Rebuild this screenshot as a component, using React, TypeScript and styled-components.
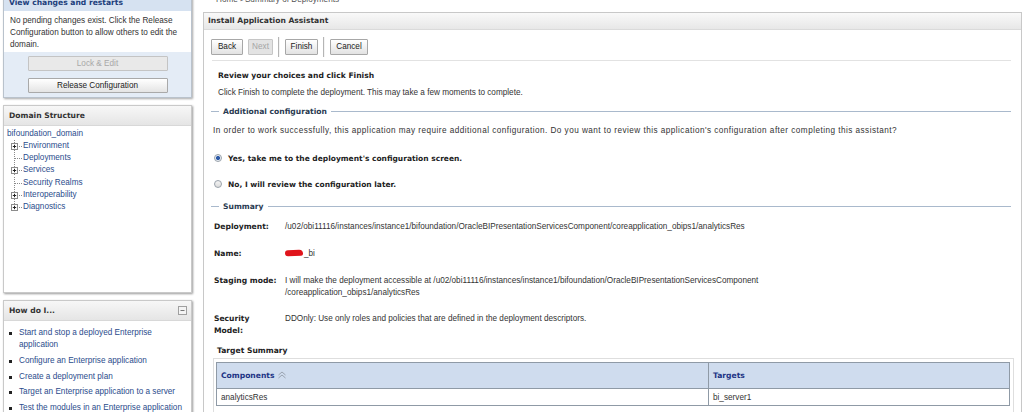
import React from 'react';
import styled, { createGlobalStyle } from 'styled-components';

const GlobalStyle = createGlobalStyle`
  *, *::before, *::after {
    box-sizing: border-box;
  }
  html, body {
    margin: 0;
    padding: 0;
    background: #fff;
  }
  body {
    font-family: "Liberation Sans", Arial, sans-serif;
    font-size: 8.2px;
    color: #333;
    overflow: hidden;
  }
`;

const treeItems = [
  { label: 'Environment', expandable: true },
  { label: 'Deployments', expandable: false },
  { label: 'Services', expandable: true },
  { label: 'Security Realms', expandable: false },
  { label: 'Interoperability', expandable: true },
  { label: 'Diagnostics', expandable: true },
];

const howItems = [
  'Start and stop a deployed Enterprise application',
  'Configure an Enterprise application',
  'Create a deployment plan',
  'Target an Enterprise application to a server',
  'Test the modules in an Enterprise application',
];

function TreeJoint({ expandable, last }: { expandable: boolean; last: boolean }) {
  return (
    <svg width="13" height="12" viewBox="0 0 13 12">
      <line x1="4.5" y1="0" x2="4.5" y2={last ? 6.5 : 12} stroke="#8a8a8a" strokeDasharray="1 1" />
      <line x1="5" y1="6.5" x2="13" y2="6.5" stroke="#8a8a8a" strokeDasharray="1 1" />
      {expandable && (
        <g>
          <rect x="1.5" y="3.5" width="6" height="6" fill="#fff" stroke="#8c8c8c" />
          <line x1="2.8" y1="6.5" x2="6.2" y2="6.5" stroke="#222" />
          <line x1="4.5" y1="4.8" x2="4.5" y2="8.2" stroke="#222" />
        </g>
      )}
    </svg>
  );
}

function SortIcon() {
  return (
    <svg width="10" height="8" viewBox="0 0 10 8">
      <path d="M1.5 4 L5 1 L8.5 4" fill="none" stroke="#9aa3b0" strokeWidth="1" />
      <path d="M1.5 7 L5 4 L8.5 7" fill="none" stroke="#9aa3b0" strokeWidth="1" />
    </svg>
  );
}

function CollapseIcon() {
  return (
    <svg width="9" height="9" viewBox="0 0 9 9">
      <rect x="0.5" y="0.5" width="8" height="8" fill="#f4f4f4" stroke="#a0a0a0" />
      <line x1="2.5" y1="4.5" x2="6.5" y2="4.5" stroke="#777" />
    </svg>
  );
}

export default function App() {
  return (
    <>
      <GlobalStyle />
      <Page>
        <Sidebar>
          <ChangePanel>
            <ChangeHeader>View changes and restarts</ChangeHeader>
            <ChangeText>
              No pending changes exist. Click the Release Configuration button to allow others to edit the
              domain.
            </ChangeText>
            <ChangeButtons>
              <SideButton disabled>Lock &amp; Edit</SideButton>
              <SideButton>Release Configuration</SideButton>
            </ChangeButtons>
          </ChangePanel>

          <BoxPanel $height={188}>
            <BoxHeader>Domain Structure</BoxHeader>
            <Tree>
              <TreeRoot>bifoundation_domain</TreeRoot>
              {treeItems.map((item, i) => (
                <TreeRow key={item.label}>
                  <TreeJoint expandable={item.expandable} last={i === treeItems.length - 1} />
                  <TreeLink>{item.label}</TreeLink>
                </TreeRow>
              ))}
            </Tree>
          </BoxPanel>

          <BoxPanel $height={140}>
            <BoxHeader>
              How do I...
              <CollapseIcon />
            </BoxHeader>
            <HowList>
              {howItems.map((text) => (
                <HowItem key={text}>{text}</HowItem>
              ))}
            </HowList>
          </BoxPanel>
        </Sidebar>

        <Main>
          <Breadcrumb>Home &gt;Summary of Deployments</Breadcrumb>
          <Assistant>
            <AssistantHeader>Install Application Assistant</AssistantHeader>
            <AssistantBody>
              <ButtonBar>
                <WizButton $width={32}>Back</WizButton>
                <WizButton $width={25} disabled>
                  Next
                </WizButton>
                <ButtonSep />
                <WizButton $width={33}>Finish</WizButton>
                <ButtonSep />
                <WizButton $width={38}>Cancel</WizButton>
              </ButtonBar>
              <Rule />
              <StepTitle>Review your choices and click Finish</StepTitle>
              <Line $mt={5} $indent={7}>
                Click Finish to complete the deployment. This may take a few moments to complete.
              </Line>

              <Legend $mt={6}>
                <LegendDash />
                <LegendText>Additional configuration</LegendText>
                <LegendLine />
              </Legend>
              <Line $mt={8} $indent={2} $tracking={0.46}>
                In order to work successfully, this application may require additional configuration. Do you want
                to review this application's configuration after completing this assistant?
              </Line>
              <RadioRow $mt={15}>
                <Radio $checked />
                Yes, take me to the deployment's configuration screen.
              </RadioRow>
              <RadioRow $mt={14}>
                <Radio />
                No, I will review the configuration later.
              </RadioRow>

              <Legend $mt={10}>
                <LegendDash />
                <LegendText>Summary</LegendText>
                <LegendLine />
              </Legend>

              <SummaryRow $mt={9}>
                <SummaryLabel>Deployment:</SummaryLabel>
                <SummaryValue>
                  /u02/obi11116/instances/instance1/bifoundation/OracleBIPresentationServicesComponent/coreapplication_obips1/analyticsRes
                </SummaryValue>
              </SummaryRow>
              <SummaryRow $mt={15}>
                <SummaryLabel>Name:</SummaryLabel>
                <SummaryValue>
                  <Redacted />_bi
                </SummaryValue>
              </SummaryRow>
              <SummaryRow $mt={15}>
                <SummaryLabel>Staging mode:</SummaryLabel>
                <SummaryValue>
                  I will make the deployment accessible at
                  /u02/obi11116/instances/instance1/bifoundation/OracleBIPresentationServicesComponent
                  <br />
                  /coreapplication_obips1/analyticsRes
                </SummaryValue>
              </SummaryRow>
              <SummaryRow $mt={14}>
                <SummaryLabel>
                  Security
                  <br />
                  Model:
                </SummaryLabel>
                <SummaryValue>DDOnly: Use only roles and policies that are defined in the deployment descriptors.</SummaryValue>
              </SummaryRow>

              <TargetTitle>Target Summary</TargetTitle>
              <TableWrap>
                <Table>
                  <thead>
                    <tr>
                      <Th $width={492}>
                        Components <SortIcon />
                      </Th>
                      <Th>Targets</Th>
                    </tr>
                  </thead>
                  <tbody>
                    <tr>
                      <Td>analyticsRes</Td>
                      <Td>bi_server1</Td>
                    </tr>
                  </tbody>
                </Table>
              </TableWrap>
            </AssistantBody>
          </Assistant>
        </Main>
      </Page>
    </>
  );
}

const Page = styled.div`
  display: flex;
  width: 1024px;
  height: 412px;
  overflow: hidden;
`;

const Sidebar = styled.div`
  width: 192px;
  flex-shrink: 0;
  padding-left: 3px;
  display: flex;
  flex-direction: column;
  gap: 7px;
`;

const ChangePanel = styled.div`
  margin-top: -5px;
  background: #e4ecf6;
  border: 1px solid #b9c2cc;
  border-top: none;
  box-shadow: 1px 1px 2px rgba(0, 0, 0, 0.35);
`;

const ChangeHeader = styled.div`
  height: 16px;
  line-height: 16px;
  padding-left: 5px;
  background: #d6e2f1;
  color: #1d3f7c;
  font-family: "DejaVu Sans", Verdana, sans-serif;
  font-weight: bold;
  font-size: 7.6px;
`;

const ChangeText = styled.div`
  background: #fff;
  padding: 4px 6px 1px 6px;
  line-height: 12px;
  color: #333;
`;

const ChangeButtons = styled.div`
  display: flex;
  flex-direction: column;
  align-items: center;
  gap: 7px;
  padding: 4px 0 4px 0;
`;

const SideButton = styled.button`
  width: 140px;
  height: 15px;
  padding: 0;
  font-family: "Liberation Sans", Arial, sans-serif;
  font-size: 8.2px;
  color: #222;
  border: 1px solid #a9a9a9;
  border-radius: 1px;
  background: linear-gradient(#ffffff, #e4e4e4);

  &:disabled {
    color: #a8a8a8;
    background: #e9e9e9;
    border-color: #c4c4c4;
  }
`;

const BoxPanel = styled.div<{ $height: number }>`
  height: ${(p) => p.$height}px;
  flex-shrink: 0;
  background: #fff;
  border: 1px solid #c9c9c9;
  box-shadow: 1px 1px 2px rgba(0, 0, 0, 0.4);
`;

const BoxHeader = styled.div`
  height: 20px;
  display: flex;
  align-items: center;
  justify-content: space-between;
  padding: 0 4px 0 5px;
  background: linear-gradient(#f7f7f7, #e5e5e5);
  border-bottom: 1px solid #d8d8d8;
  color: #333;
  font-family: "DejaVu Sans", Verdana, sans-serif;
  font-weight: bold;
  font-size: 7.6px;
`;

const Tree = styled.div`
  padding: 2px 0 0 3px;
`;

const TreeRoot = styled.div`
  height: 12px;
  line-height: 12px;
  color: #2b4c8c;
`;

const TreeRow = styled.div`
  display: flex;
  align-items: center;
  height: 12.2px;
  padding-left: 3px;
`;

const TreeLink = styled.span`
  color: #2b4c8c;
  line-height: 12px;
`;

const HowList = styled.ul`
  list-style: none;
  margin: 0;
  padding: 6px 8px 0 15px;
  display: flex;
  flex-direction: column;
  gap: 3.8px;
`;

const HowItem = styled.li`
  position: relative;
  color: #2b4c8c;
  line-height: 12px;

  &::before {
    content: '';
    position: absolute;
    left: -10px;
    top: 5px;
    width: 3px;
    height: 3px;
    background: #222;
  }
`;

const Main = styled.div`
  flex: 1;
  padding: 0 2px 0 11px;
  display: flex;
  flex-direction: column;
`;

const Breadcrumb = styled.div`
  height: 12px;
  line-height: 12px;
  margin-top: -6px;
  margin-bottom: 6px;
  padding-left: 13px;
  color: #555;
`;

const Assistant = styled.div`
  flex: 1;
  border: 1px solid #c8c8c8;
  border-bottom: none;
  background: #fff;
`;

const AssistantHeader = styled.div`
  height: 17px;
  line-height: 16px;
  padding-left: 4px;
  background: linear-gradient(#f9f9f9, #e7e7e7);
  border-bottom: 1px solid #dadada;
  color: #333;
  font-family: "DejaVu Sans", Verdana, sans-serif;
  font-weight: bold;
  font-size: 7.6px;
`;

const AssistantBody = styled.div`
  padding: 0 6px 0 7px;
`;

const ButtonBar = styled.div`
  display: flex;
  align-items: center;
  gap: 5px;
  margin-top: 8px;
  height: 17px;
`;

const WizButton = styled.button<{ $width: number }>`
  width: ${(p) => p.$width}px;
  height: 16px;
  padding: 0;
  font-family: "Liberation Sans", Arial, sans-serif;
  font-size: 8.2px;
  color: #222;
  border: 1px solid #a7a7a7;
  border-radius: 1px;
  background: linear-gradient(#ffffff, #e2e2e2);

  &:disabled {
    color: #a5a5a5;
    background: #e3e3e3;
    border-color: #c6c6c6;
  }
`;

const ButtonSep = styled.span`
  width: 2px;
  height: 20px;
  background: #b5b5b5;
  border-right: 1px solid #f4f4f4;
`;

const Rule = styled.div`
  margin-top: 5px;
  margin-left: 1px;
  border-top: 1px solid #e2e2e2;
  margin-right: 4px;
`;

const StepTitle = styled.div`
  margin-top: 9px;
  padding-left: 7px;
  height: 12px;
  line-height: 12px;
  font-family: "DejaVu Sans", Verdana, sans-serif;
  font-weight: bold;
  font-size: 7.6px;
  color: #222;
`;

const Line = styled.div<{ $mt: number; $indent: number; $tracking?: number }>`
  margin-top: ${(p) => p.$mt}px;
  padding-left: ${(p) => p.$indent}px;
  letter-spacing: ${(p) => p.$tracking ?? 0}px;
  line-height: 12px;
  white-space: nowrap;
  color: #333;
`;

const Legend = styled.div<{ $mt: number }>`
  margin-top: ${(p) => p.$mt}px;
  margin-right: 4px;
  height: 12px;
  display: flex;
  align-items: center;
`;

const LegendDash = styled.span`
  width: 8px;
  border-top: 1px solid #a9b9cc;
`;

const LegendText = styled.span`
  padding: 0 4px;
  font-family: "DejaVu Sans", Verdana, sans-serif;
  font-weight: bold;
  font-size: 7.6px;
  color: #2a3b52;
`;

const LegendLine = styled.span`
  flex: 1;
  border-top: 1px solid #a9b9cc;
`;

const RadioRow = styled.div<{ $mt: number }>`
  margin-top: ${(p) => p.$mt}px;
  height: 12px;
  display: flex;
  align-items: center;
  gap: 6px;
  padding-left: 3px;
  font-family: "DejaVu Sans", Verdana, sans-serif;
  font-weight: bold;
  font-size: 7.5px;
  color: #222;
`;

const Radio = styled.span<{ $checked?: boolean }>`
  width: 8px;
  height: 8px;
  border-radius: 50%;
  border: 1px solid #9aa2ab;
  background: ${(p) =>
    p.$checked
      ? 'radial-gradient(circle, #2d5aa8 0 1.8px, #e8eef5 2.3px)'
      : 'linear-gradient(#f4f4f4, #dcdcdc)'};
`;

const SummaryRow = styled.div<{ $mt: number }>`
  margin-top: ${(p) => p.$mt}px;
  display: grid;
  grid-template-columns: 71px 1fr;
  line-height: 12px;
  padding-left: 3px;
`;

const SummaryLabel = styled.div`
  font-family: "DejaVu Sans", Verdana, sans-serif;
  font-weight: bold;
  font-size: 7.6px;
  color: #222;
`;

const SummaryValue = styled.div`
  white-space: nowrap;
  color: #333;
`;

const Redacted = styled.span`
  display: inline-block;
  width: 18px;
  height: 6px;
  margin-right: 1px;
  vertical-align: 0;
  border-radius: 3px 4px 2px 3px;
  background: #e0141b;
  transform: rotate(-3deg);
`;

const TargetTitle = styled.div`
  margin-top: 8px;
  padding-left: 6px;
  height: 12px;
  line-height: 12px;
  font-family: "DejaVu Sans", Verdana, sans-serif;
  font-weight: bold;
  font-size: 7.6px;
  color: #222;
`;

const TableWrap = styled.div`
  margin-top: 1px;
  margin-right: 1px;
  margin-left: 2px;
  border: 1px solid #dedede;
  padding: 3px 3px 0 2px;
  height: 60px;
`;

const Table = styled.table`
  width: 100%;
  border-collapse: collapse;
  border: 1px solid #8f9aa6;
`;

const Th = styled.th<{ $width?: number }>`
  width: ${(p) => (p.$width ? `${p.$width}px` : 'auto')};
  height: 26px;
  padding: 0 4px;
  text-align: left;
  background: #cfdcee;
  border: 1px solid #8f9aa6;
  font-family: "DejaVu Sans", Verdana, sans-serif;
  font-weight: bold;
  font-size: 7.6px;
  color: #1d3485;

  svg {
    vertical-align: -1px;
  }
`;

const Td = styled.td`
  height: 17px;
  padding: 0 4px;
  border: 1px solid #8f9aa6;
  color: #333;
`;
